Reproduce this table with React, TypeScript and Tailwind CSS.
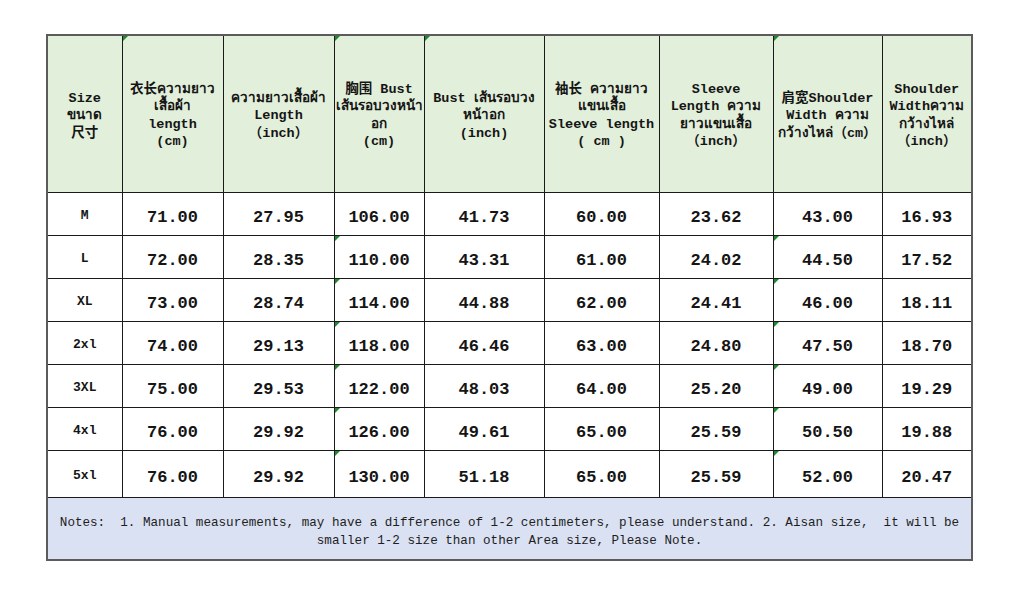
const font = {
  fontFamily: '"Liberation Mono", "Noto Sans CJK SC", "DejaVu Sans", monospace',
};

const colWidths = [75, 101, 111, 90, 120, 115, 114, 109, 90];

const headers: string[][] = [
  ["Size", "ขนาด", "尺寸"],
  ["衣长ความยาว", "เสื้อผ้า", "length", "(cm)"],
  ["ความยาวเสื้อผ้า", "Length", "（inch）"],
  ["胸围 Bust", "เส้นรอบวงหน้า", "อก", "(cm)"],
  ["Bust เส้นรอบวง", "หน้าอก", "(inch)"],
  ["袖长 ความยาว", "แขนเสื้อ", "Sleeve length", "( cm )"],
  ["Sleeve", "Length ความ", "ยาวแขนเสื้อ", "（inch）"],
  ["肩宽Shoulder", "Width ความ", "กว้างไหล่（cm）"],
  ["Shoulder", "Widthความ", "กว้างไหล่", "（inch）"],
];

const rows = [
  ["M", "71.00", "27.95", "106.00", "41.73", "60.00", "23.62", "43.00", "16.93"],
  ["L", "72.00", "28.35", "110.00", "43.31", "61.00", "24.02", "44.50", "17.52"],
  ["XL", "73.00", "28.74", "114.00", "44.88", "62.00", "24.41", "46.00", "18.11"],
  ["2xl", "74.00", "29.13", "118.00", "46.46", "63.00", "24.80", "47.50", "18.70"],
  ["3XL", "75.00", "29.53", "122.00", "48.03", "64.00", "25.20", "49.00", "19.29"],
  ["4xl", "76.00", "29.92", "126.00", "49.61", "65.00", "25.59", "50.50", "19.88"],
  ["5xl", "76.00", "29.92", "130.00", "51.18", "65.00", "25.59", "52.00", "20.47"],
];

// excel's little green "number stored as text" markers
const headerFlags = [1, 3, 4, 7];
const rowFlags = [3, 7];

function Flag() {
  return (
    <span className="absolute left-0 top-0 w-0 h-0 border-t-[5px] border-r-[5px] border-t-[#1f8a2b] border-r-transparent" />
  );
}

export default function App() {
  return (
    <div className="w-[1024px] h-[609px] bg-white pl-[46px] pt-[34px]" style={font}>
      <table className="table-fixed border-collapse border-2 border-[#5b5b5b] text-[#151515]">
        <colgroup>
          {colWidths.map((w, i) => (
            <col key={i} style={{ width: w }} />
          ))}
        </colgroup>
        <tbody>
          <tr className="h-[157px] bg-[#e2efda]">
            {headers.map((lines, i) => (
              <td
                key={i}
                className="relative border border-[#1a1a1a] text-center align-middle text-[13.5px] font-bold leading-[17.5px] px-0 pt-[4px]"
              >
                {headerFlags.includes(i) && <Flag />}
                {lines.map((l, j) => (
                  <div key={j} className="whitespace-nowrap">
                    {l}
                  </div>
                ))}
              </td>
            ))}
          </tr>
          {rows.map((r, ri) => (
            <tr key={ri} className={ri === rows.length - 1 ? "h-[47px]" : "h-[43px]"}>
              {r.map((v, ci) => (
                <td
                  key={ci}
                  className={
                    "relative border border-[#1a1a1a] text-center align-middle font-bold " +
                    (ci === 0 ? "text-[13px] pt-[5px]" : "text-[17px] pt-[8px]")
                  }
                >
                  {ri > 0 && rowFlags.includes(ci) && <Flag />}
                  {v}
                </td>
              ))}
            </tr>
          ))}
          <tr className="h-[63px] bg-[#d9e1f2]">
            <td
              colSpan={9}
              className="border border-[#1a1a1a] text-center align-middle text-[12.6px] leading-[18px] px-2 pt-[8px] text-[#1e1e1e] whitespace-pre-wrap"
            >
              {"Notes:  1. Manual measurements, may have a difference of 1-2 centimeters, please understand. 2. Aisan size,  it will be smaller 1-2 size than other Area size, Please Note."}
            </td>
          </tr>
        </tbody>
      </table>
    </div>
  );
}
